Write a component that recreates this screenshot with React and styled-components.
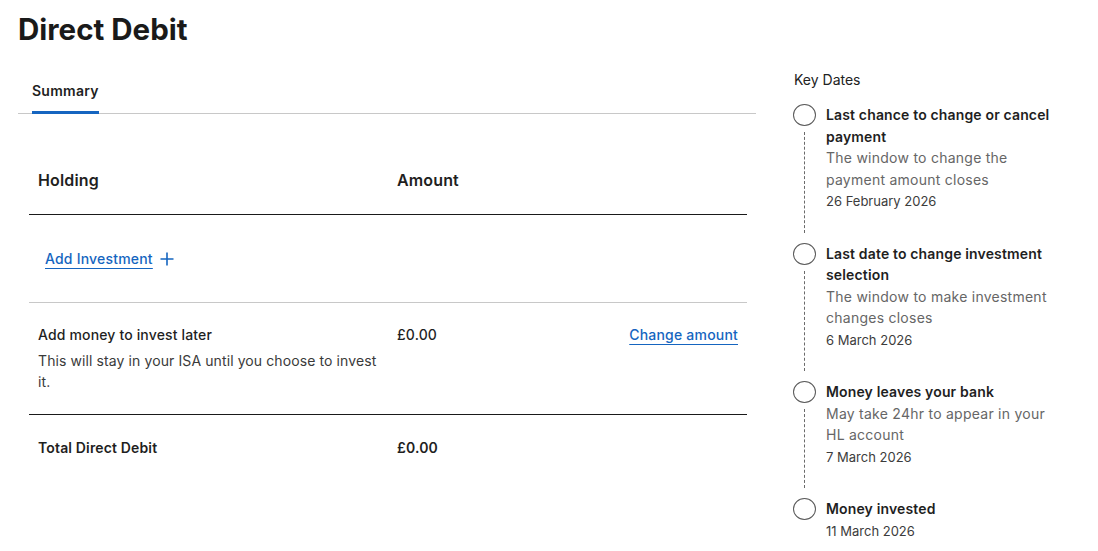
import React from "react";
import styled, { createGlobalStyle } from "styled-components";

const GlobalStyle = createGlobalStyle`
  html, body { margin: 0; padding: 0; background: #fff; }
  body {
    font-family: Inter, "Noto Sans", "Liberation Sans", sans-serif;
    color: #1f1f1f;
    -webkit-font-smoothing: antialiased;
  }
  * { box-sizing: border-box; }
`;

const Page = styled.div`
  padding: 12px 42px 0 18px;
  width: 1098px;
`;

const Title = styled.h1`
  margin: 0;
  font-size: 29.5px;
  line-height: 34px;
  font-weight: 700;
  color: #1a1a1a;
`;

const Layout = styled.div`
  display: grid;
  grid-template-columns: 738px 262px;
  column-gap: 38px;
  margin-top: 24px;
`;

const Main = styled.main``;

const TabList = styled.div`
  display: flex;
  border-bottom: 1px solid #c8c8c8;
  height: 44px;
  padding-left: 14px;
`;

const Tab = styled.div`
  padding-top: 11px;
  font-size: 14px;
  line-height: 20px;
  font-weight: 600;
  letter-spacing: 0.25px;
  color: #1f1f1f;
  height: 44px;
  border-bottom: 3px solid ${(p) => (p.$active ? "#1565c0" : "transparent")};
`;

const Table = styled.div`
  margin: 32px 9px 0 11px;
`;

const Row = styled.div`
  display: grid;
  grid-template-columns: 359px 1fr auto;
  border-bottom: 1px solid ${(p) => (p.$strong ? "#1a1a1a" : "#c8c8c8")};
  padding: ${(p) => p.$pad};
  &:last-child { border-bottom: none; }
`;

const Cell = styled.div`
  padding: 0 9px;
  font-size: ${(p) => (p.$head ? "16px" : "14px")};
  line-height: ${(p) => (p.$head ? "24px" : "20px")};
  font-weight: ${(p) => (p.$bold ? 600 : 500)};
  letter-spacing: 0.15px;
  color: #1f1f1f;
  text-align: ${(p) => (p.$right ? "right" : "left")};
`;

const RowDesc = styled.p`
  margin: 5px 0 0;
  font-size: 14px;
  line-height: 21px;
  font-weight: 400;
  color: #3a3a3a;
  letter-spacing: 0.1px;
`;

const LinkText = styled.a`
  color: #1565c0;
  font-size: 14px;
  line-height: 20px;
  font-weight: 500;
  text-decoration: underline;
  text-underline-offset: 4px;
  text-decoration-thickness: 1px;
  letter-spacing: 0.2px;
  cursor: pointer;
`;

const AddLink = styled.div`
  display: flex;
  align-items: center;
  gap: 7px;
  padding-left: 16px;
  color: #1565c0;
`;

const Aside = styled.aside``;

const AsideTitle = styled.h2`
  margin: 0;
  font-size: 14px;
  line-height: 20px;
  font-weight: 400;
  color: #222;
`;

const Timeline = styled.ol`
  list-style: none;
  margin: 14px 0 0;
  padding: 0;
`;

const Item = styled.li`
  display: grid;
  grid-template-columns: 22px 1fr;
  column-gap: 10px;
`;

const Marker = styled.div`
  display: flex;
  flex-direction: column;
  align-items: center;
`;

const Circle = styled.span`
  width: 23px;
  height: 22px;
  margin-left: -2px;
  border-radius: 50%;
  border: 1.2px solid #5a5a5a;
  flex: none;
`;

const Dash = styled.span`
  flex: 1;
  width: 0;
  border-left: 1px dashed #6a6a6a;
  margin: 6px 0 10px;
  transform: translateX(-1px);
`;

const ItemBody = styled.div`
  padding-bottom: ${(p) => (p.$last ? "0" : "29.5px")};
`;

const ItemTitle = styled.div`
  font-size: 14px;
  line-height: 21.5px;
  font-weight: 600;
  color: #1f1f1f;
  letter-spacing: 0.15px;
`;

const ItemDesc = styled.div`
  font-size: 14px;
  line-height: 21.5px;
  color: #666;
  letter-spacing: 0.25px;
`;

const ItemDate = styled.div`
  font-size: 13px;
  line-height: 23px;
  color: #3c3c3c;
`;

const PlusIcon = () => (
  <svg width="14" height="14" viewBox="0 0 14 14" aria-hidden="true">
    <path d="M7 0.5v13M0.5 7h13" stroke="#1565c0" strokeWidth="1.6" fill="none" />
  </svg>
);

const dates = [
  {
    title: "Last chance to change or cancel payment",
    desc: "The window to change the payment amount closes",
    date: "26 February 2026",
  },
  {
    title: "Last date to change investment selection",
    desc: "The window to make investment changes closes",
    date: "6 March 2026",
  },
  {
    title: "Money leaves your bank",
    desc: "May take 24hr to appear in your HL account",
    date: "7 March 2026",
  },
  { title: "Money invested", desc: null, date: "11 March 2026" },
];

export default function App() {
  return (
    <>
      <GlobalStyle />
      <Page>
        <Title>Direct Debit</Title>
        <Layout>
          <Main>
            <TabList>
              <Tab $active>Summary</Tab>
            </TabList>
            <Table>
              <Row $strong $pad="22px 0 22px">
                <Cell $head $bold>Holding</Cell>
                <Cell $head $bold>Amount</Cell>
                <Cell />
              </Row>
              <Row $pad="34px 0 33px">
                <AddLink>
                  <LinkText>Add Investment</LinkText>
                  <PlusIcon />
                </AddLink>
              </Row>
              <Row $strong $pad="22px 0 22px">
                <Cell>
                  Add money to invest later
                  <RowDesc>This will stay in your ISA until you choose to invest it.</RowDesc>
                </Cell>
                <Cell>£0.00</Cell>
                <Cell $right>
                  <LinkText>Change amount</LinkText>
                </Cell>
              </Row>
              <Row $pad="23px 0 20px">
                <Cell $bold>Total Direct Debit</Cell>
                <Cell $bold>£0.00</Cell>
                <Cell />
              </Row>
            </Table>
          </Main>
          <Aside>
            <AsideTitle>Key Dates</AsideTitle>
            <Timeline>
              {dates.map((d, i) => {
                const last = i === dates.length - 1;
                return (
                  <Item key={d.title}>
                    <Marker>
                      <Circle />
                      {!last && <Dash />}
                    </Marker>
                    <ItemBody $last={last}>
                      <ItemTitle>{d.title}</ItemTitle>
                      {d.desc && <ItemDesc>{d.desc}</ItemDesc>}
                      <ItemDate>{d.date}</ItemDate>
                    </ItemBody>
                  </Item>
                );
              })}
            </Timeline>
          </Aside>
        </Layout>
      </Page>
    </>
  );
}
